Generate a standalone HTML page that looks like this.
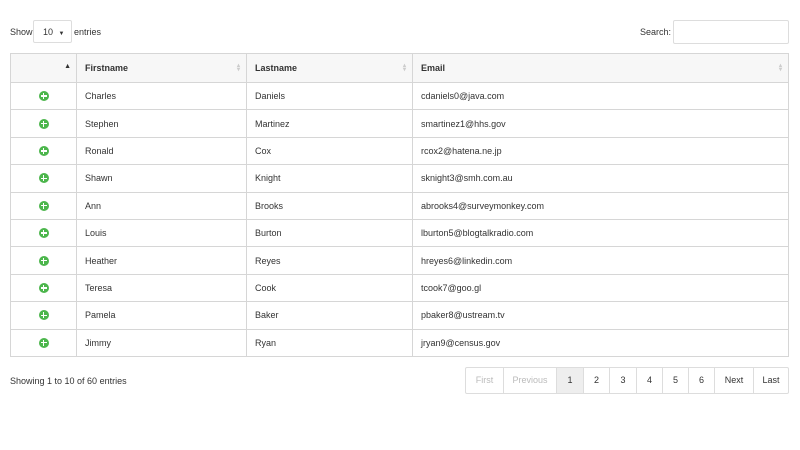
<!DOCTYPE html><html><head><style>
*{box-sizing:border-box;margin:0;padding:0}
body{width:800px;height:450px;background:#fff;font-family:"Liberation Sans",sans-serif;font-size:9px;color:#333;position:relative}
.a{position:absolute}
table{position:absolute;left:10px;top:53px;width:779px;border-collapse:collapse;table-layout:fixed}
td,th{border:1px solid #d6d6d6;padding:0 8px;text-align:left;height:27.4px;vertical-align:middle}
th{height:29px;background:#f7f7f7;font-weight:bold;position:relative}
th .s{position:absolute;right:6px;top:10px;font-size:6px;color:#ccc;line-height:4px}
.p{display:block;margin:0 auto;width:10px;height:10px;border-radius:50%;background:#4cb64c;position:relative}
.p:before{content:"";position:absolute;left:2px;top:4.3px;width:6px;height:1.4px;background:#fff}
.p:after{content:"";position:absolute;left:4.3px;top:2px;width:1.4px;height:6px;background:#fff}
.pg{position:absolute;top:367px;left:465px;height:27px;display:flex;border:1px solid #ddd;border-radius:2px}
.pg div{height:25px;line-height:25px;text-align:center;border-left:1px solid #ddd}
.pg div:first-child{border-left:none}
</style></head><body>
<div class="a" style="left:10px;top:27px">Show</div>
<div class="a" style="left:33px;top:20px;width:39px;height:23px;border:1px solid #ddd;border-radius:2px;padding:6px 0 0 9px">10 <span style="font-size:6px;margin-left:3px">▼</span></div>
<div class="a" style="left:74px;top:27px">entries</div>
<div class="a" style="left:640px;top:27px">Search:</div>
<div class="a" style="left:673px;top:20px;width:116px;height:24px;border:1px solid #ddd;border-radius:2px"></div>
<table>
<colgroup><col style="width:66px"><col style="width:170px"><col style="width:166px"><col></colgroup>
<tr><th><span style="position:absolute;right:5px;top:9px;font-size:7px">▲</span></th><th>Firstname<span class="s">▴<br>▾</span></th><th>Lastname<span class="s">▴<br>▾</span></th><th>Email<span class="s">▴<br>▾</span></th></tr>
<tr><td><span class="p"></span></td><td>Charles</td><td>Daniels</td><td>cdaniels0@java.com</td></tr>
<tr><td><span class="p"></span></td><td>Stephen</td><td>Martinez</td><td>smartinez1@hhs.gov</td></tr>
<tr><td><span class="p"></span></td><td>Ronald</td><td>Cox</td><td>rcox2@hatena.ne.jp</td></tr>
<tr><td><span class="p"></span></td><td>Shawn</td><td>Knight</td><td>sknight3@smh.com.au</td></tr>
<tr><td><span class="p"></span></td><td>Ann</td><td>Brooks</td><td>abrooks4@surveymonkey.com</td></tr>
<tr><td><span class="p"></span></td><td>Louis</td><td>Burton</td><td>lburton5@blogtalkradio.com</td></tr>
<tr><td><span class="p"></span></td><td>Heather</td><td>Reyes</td><td>hreyes6@linkedin.com</td></tr>
<tr><td><span class="p"></span></td><td>Teresa</td><td>Cook</td><td>tcook7@goo.gl</td></tr>
<tr><td><span class="p"></span></td><td>Pamela</td><td>Baker</td><td>pbaker8@ustream.tv</td></tr>
<tr><td><span class="p"></span></td><td>Jimmy</td><td>Ryan</td><td>jryan9@census.gov</td></tr>
</table>
<div class="a" style="left:10px;top:376px">Showing 1 to 10 of 60 entries</div>
<div class="pg">
<div style="width:37px;color:#bbb">First</div><div style="width:53px;color:#bbb">Previous</div><div style="width:27px;background:#eee">1</div><div style="width:26px">2</div><div style="width:27px">3</div><div style="width:26px">4</div><div style="width:26px">5</div><div style="width:26px">6</div><div style="width:39px">Next</div><div style="width:35px">Last</div>
</div>
</body></html>
